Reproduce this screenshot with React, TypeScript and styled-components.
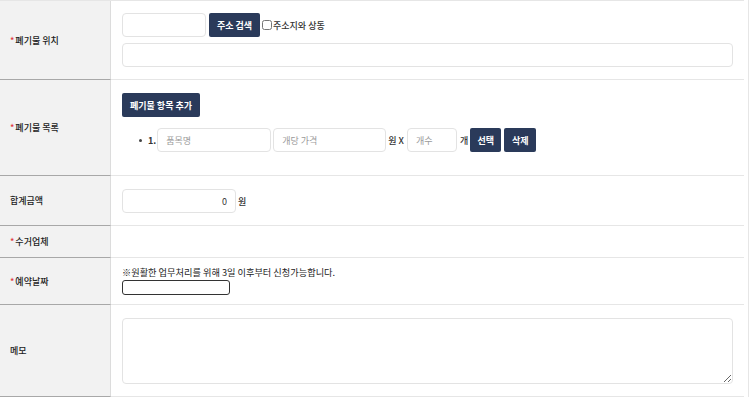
import React from 'react';
import styled, { createGlobalStyle } from 'styled-components';

const GlobalStyle = createGlobalStyle`
  html, body {
    margin: 0;
    padding: 0;
    background: #fff;
  }
  body {
    font-family: 'Noto Sans CJK KR', 'Noto Sans', sans-serif;
    font-size: 9px;
    color: #333;
  }
  * {
    box-sizing: border-box;
  }
`;

const Page = styled.div`
  width: 749px;
  min-height: 397px;
  border-right: 1px solid #e6e6e6;
`;

const Table = styled.div`
  width: 744px;
  border-top: 1px solid #e6e6e6;
`;

const Row = styled.div<{ h?: number }>`
  display: grid;
  grid-template-columns: 111px 1fr;
  min-height: ${(p) => (p.h ? `${p.h}px` : 'auto')};
`;

const LabelCell = styled.div`
  display: flex;
  align-items: center;
  padding-left: 10px;
  background: #f2f2f2;
  border-right: 1px solid #dcdcdc;
  border-bottom: 1px solid #a8a8a8;
  font-weight: 500;
  color: #222;
`;

const Required = styled.span`
  color: #e0393e;
  margin-right: 1px;
`;

const ContentCell = styled.div<{ pt?: number; pb?: number }>`
  display: flex;
  flex-direction: column;
  align-items: flex-start;
  padding: ${(p) => p.pt ?? 12}px 11px ${(p) => p.pb ?? 12}px 11px;
  border-bottom: 1px solid #e6e6e6;
`;

const Line = styled.div<{ gap?: number }>`
  display: flex;
  align-items: center;
  gap: ${(p) => p.gap ?? 3}px;
`;

const TextInput = styled.input<{ w: number; right?: boolean }>`
  width: ${(p) => p.w}px;
  height: 24px;
  border: 1px solid #e3e3e3;
  border-radius: 4px;
  padding: 0 8px;
  font-family: inherit;
  font-size: 9px;
  color: #333;
  text-align: ${(p) => (p.right ? 'right' : 'left')};
  outline: none;
  &::placeholder {
    color: #9a9a9a;
  }
`;

const Button = styled.button<{ w: number }>`
  width: ${(p) => p.w}px;
  height: 24px;
  padding: 0;
  background: #2a3a5a;
  color: #fff;
  border: none;
  border-radius: 2px;
  font-family: inherit;
  font-size: 9px;
  font-weight: 700;
  cursor: pointer;
`;

const CheckLabel = styled.label`
  display: flex;
  align-items: center;
  gap: 1px;
  margin-left: -1px;
  font-weight: 500;
  input {
    width: 10px;
    height: 10px;
    margin: 0;
  }
`;

const ItemRow = styled.div`
  display: flex;
  align-items: center;
  gap: 2px;
  margin-left: 17px;
  margin-top: 11px;
`;

const Bullet = styled.span`
  width: 3px;
  height: 3px;
  border-radius: 50%;
  background: #444;
  margin-right: 4px;
`;

const Num = styled.span`
  font-weight: 700;
  color: #333;
  margin-right: -1px;
`;

const Unit = styled.span<{ ml?: number; mr?: number }>`
  color: #333;
  font-weight: 500;
  margin: 0 ${(p) => p.mr ?? 0}px 0 ${(p) => p.ml ?? 0}px;
`;

const Note = styled.div`
  line-height: 12px;
  font-size: 9.2px;
  color: #222;
`;

const DateBox = styled.input`
  width: 108px;
  height: 15px;
  margin-top: 2px;
  border: 1px solid #333;
  border-radius: 3px;
  padding: 0 4px;
  font-size: 9px;
  outline: none;
`;

const Memo = styled.textarea`
  width: 611px;
  height: 66px;
  border: 1px solid #e3e3e3;
  border-radius: 4px;
  font-family: inherit;
  font-size: 9px;
  outline: none;
`;

export default function App() {
  return (
    <>
      <GlobalStyle />
      <Page>
        <Table>
          <Row>
            <LabelCell>
              <Required>*</Required>폐기물 위치
            </LabelCell>
            <ContentCell>
              <Line>
                <TextInput w={84} />
                <Button w={51}>주소 검색</Button>
                <CheckLabel>
                  <input type="checkbox" />
                  주소지와 상동
                </CheckLabel>
              </Line>
              <TextInput w={611} style={{ marginTop: 6 }} />
            </ContentCell>
          </Row>
          <Row>
            <LabelCell>
              <Required>*</Required>폐기물 목록
            </LabelCell>
            <ContentCell pt={13} pb={23}>
              <Button w={78}>폐기물 항목 추가</Button>
              <ItemRow>
                <Bullet />
                <Num>1.</Num>
                <TextInput w={114} placeholder="품목명" />
                <TextInput w={113} placeholder="개당 가격" />
                <Unit mr={1}>원 X</Unit>
                <TextInput w={50} placeholder="개수" />
                <Unit ml={1}>개</Unit>
                <Button w={31}>선택</Button>
                <Button w={32} style={{ marginLeft: 1 }}>삭제</Button>
              </ItemRow>
            </ContentCell>
          </Row>
          <Row>
            <LabelCell>합계금액</LabelCell>
            <ContentCell pt={13} pb={12}>
              <Line gap={2}>
                <TextInput w={114} right defaultValue="0" />
                <Unit>원</Unit>
              </Line>
            </ContentCell>
          </Row>
          <Row h={32}>
            <LabelCell>
              <Required>*</Required>수거업체
            </LabelCell>
            <ContentCell pt={0} pb={0} />
          </Row>
          <Row h={47}>
            <LabelCell>
              <Required>*</Required>예약날짜
            </LabelCell>
            <ContentCell pt={8} pb={8}>
              <Note>※원활한 업무처리를 위해 3일 이후부터 신청가능합니다.</Note>
              <DateBox />
            </ContentCell>
          </Row>
          <Row>
            <LabelCell>메모</LabelCell>
            <ContentCell pt={13} pb={12}>
              <Memo />
            </ContentCell>
          </Row>
        </Table>
      </Page>
    </>
  );
}
